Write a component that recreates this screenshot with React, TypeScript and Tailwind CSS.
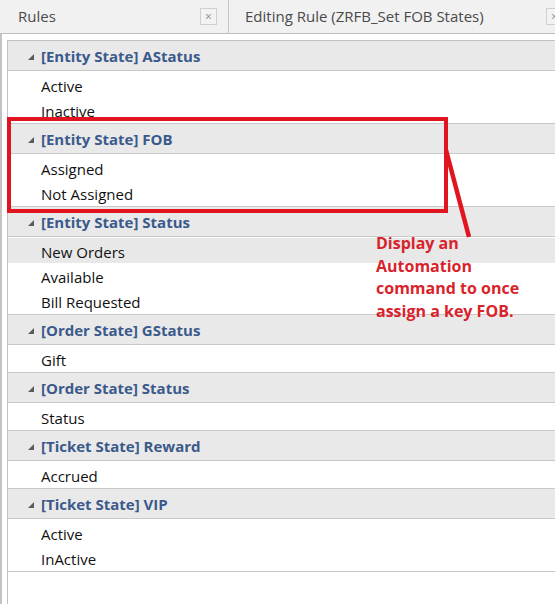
const groups: { title: string; items: string[] }[] = [
  { title: "[Entity State] AStatus", items: ["Active", "Inactive"] },
  { title: "[Entity State] FOB", items: ["Assigned", "Not Assigned"] },
  { title: "[Entity State] Status", items: ["New Orders", "Available", "Bill Requested"] },
  { title: "[Order State] GStatus", items: ["Gift"] },
  { title: "[Order State] Status", items: ["Status"] },
  { title: "[Ticket State] Reward", items: ["Accrued"] },
  { title: "[Ticket State] VIP", items: ["Active", "InActive"] },
];

function Expander() {
  return (
    <svg width="6" height="6" viewBox="0 0 6 6" className="shrink-0" aria-hidden="true">
      <polygon points="6,0 6,6 0,6" fill="#5a5a5a" />
    </svg>
  );
}

function CloseBox({ className = "" }: { className?: string }) {
  return (
    <span
      className={
        "flex h-[17px] w-[17px] shrink-0 items-center justify-center border border-[#cfcfcf] bg-[#f3f3f3] text-[12px] leading-none text-[#8a8a8a] " +
        className
      }
    >
      ×
    </span>
  );
}

function Group({ title, items }: { title: string; items: string[] }) {
  return (
    <div>
      <div className="flex h-[30px] items-center gap-[7px] border-b border-[#c9c9c9] bg-[#e9e9e9] pl-[20px] pt-[2px]">
        <Expander />
        <span className="text-[15px] font-bold text-[#3b5a8b]">{title}</span>
      </div>
      <div className="border-b border-[#c9c9c9] py-px">
        {items.map((item) => (
          <div
            key={item}
            className={
              "flex h-[25px] items-center pl-[33px] pt-[3px] text-[15px] text-[#111] " +
              (item === "New Orders" ? "bg-[#e8e8e8]" : "")
            }
          >
            {item}
          </div>
        ))}
      </div>
    </div>
  );
}

export default function App() {
  return (
    <div className="relative h-[604px] w-[555px] overflow-hidden bg-white font-['Open_Sans','Noto_Sans',sans-serif]">
      <div className="flex h-[34px] border-b border-[#bdbdbd] bg-[#f1f1f1]">
        <div className="flex w-[229px] items-center justify-between border-r border-[#c6c6c6] pl-[18px] pr-[11px]">
          <span className="text-[15px] text-[#4a4a4a]">Rules</span>
          <CloseBox />
        </div>
        <div className="flex flex-1 items-center justify-between pl-[16px]">
          <span className="text-[15px] text-[#4a4a4a]">Editing Rule (ZRFB_Set FOB States)</span>
          <CloseBox className="-mr-[8px]" />
        </div>
      </div>

      <div className="h-[570px] border-l-2 border-[#c3c3c3] pl-[5px] pt-[6px]">
        <div className="h-full border-l border-t border-[#c3c3c3]">
          {groups.map((g) => (
            <Group key={g.title} title={g.title} items={g.items} />
          ))}
        </div>
      </div>

      {/* annotation drawn over the list */}
      <div className="absolute left-[7px] top-[117px] h-[96px] w-[441px] border-[4px] border-[#e1151f]" />
      <svg className="absolute left-0 top-0" width="555" height="604" aria-hidden="true">
        <line x1="446" y1="150" x2="469" y2="237" stroke="#e1151f" strokeWidth="4.5" />
      </svg>
      <div className="absolute left-[376px] top-[232px] text-[16px] font-bold leading-[22.7px] text-[#d9232b]">
        Display an
        <br />
        Automation
        <br />
        command to once
        <br />
        assign a key FOB.
      </div>
    </div>
  );
}
